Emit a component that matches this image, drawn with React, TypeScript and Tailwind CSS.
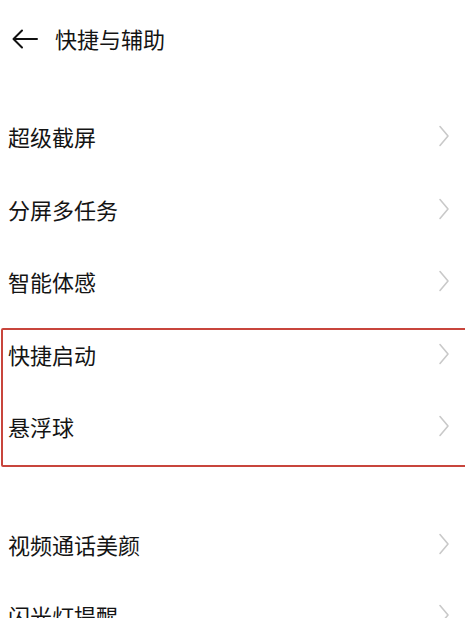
import React from "react";

const font = { fontFamily: '"Noto Sans CJK SC", "Noto Sans", sans-serif' };

function Chevron() {
  return (
    <svg width="12" height="22" viewBox="0 0 12 22" fill="none" className="shrink-0">
      <path d="M2 1.5 L10 11 L2 20.5" stroke="#c9c9c9" strokeWidth="1.6" strokeLinecap="round" strokeLinejoin="round" />
    </svg>
  );
}

function Row({ label }: { label: string }) {
  return (
    <div className="flex h-[72.5px] items-center justify-between pl-[8px] pr-[15px]">
      <span className="text-[22px] leading-none text-[#141414]">{label}</span>
      <Chevron />
    </div>
  );
}

export default function App() {
  return (
    <div className="relative h-[618px] w-[465px] overflow-hidden bg-white" style={font}>
      <div className="flex h-[76px] items-center pl-[12px]">
        <svg width="26" height="20" viewBox="0 0 26 20" fill="none" className="mt-[1px]">
          <path d="M25 10 H2 M10 1.5 L1.5 10 L10 18.5" stroke="#111" strokeWidth="2" strokeLinecap="round" strokeLinejoin="round" />
        </svg>
        <span className="ml-[17px] text-[22px] leading-none text-[#141414]">快捷与辅助</span>
      </div>
      <div className="mt-[24px]">
        <Row label="超级截屏" />
        <Row label="分屏多任务" />
        <Row label="智能体感" />
        <Row label="快捷启动" />
        <Row label="悬浮球" />
      </div>
      <div className="mt-[45px]">
        <div className="h-[71px]">
          <Row label="视频通话美颜" />
        </div>
        <Row label="闪光灯提醒" />
      </div>
      <div className="pointer-events-none absolute left-[1px] top-[328px] h-[139px] w-[470px] rounded-[2px] border-2 border-[#c8453c]" />
    </div>
  );
}
